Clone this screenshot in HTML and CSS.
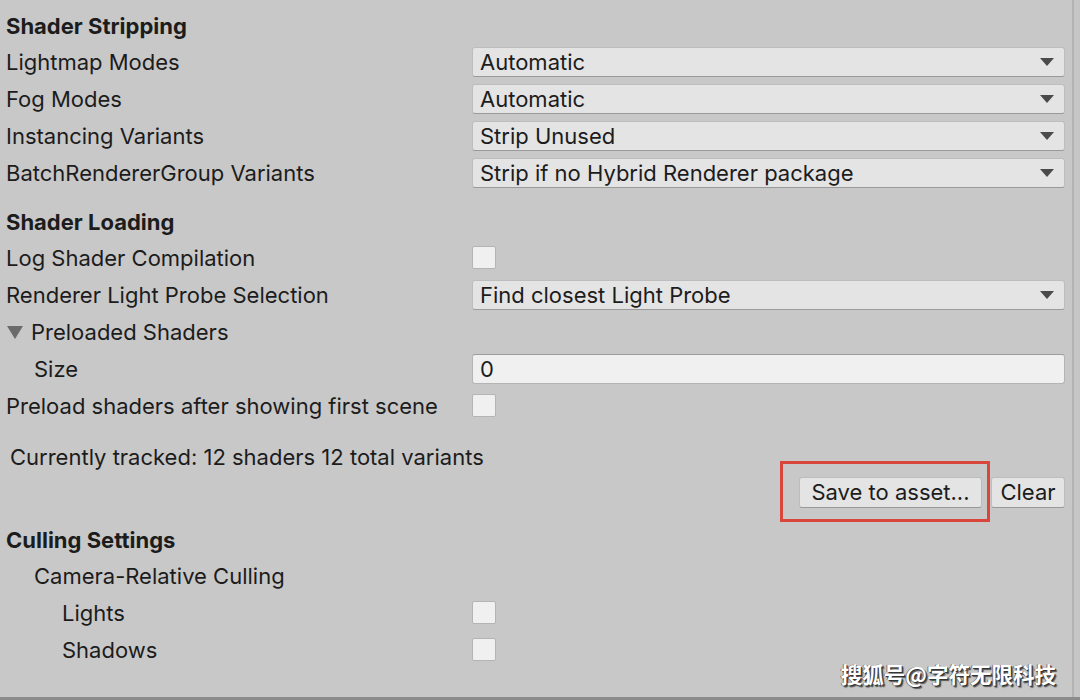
FILE: index.html
```html
<!DOCTYPE html>
<html>
<head>
<meta charset="utf-8">
<link rel="stylesheet" href="styles.css">
</head>
<body>
<div class="frame">
  <div class="panel">
    <div class="heading first">Shader Stripping</div>
    <div class="row">
      <div class="label">Lightmap Modes</div>
      <div class="control"><div class="dropdown"><span>Automatic</span><i class="arrow"></i></div></div>
    </div>
    <div class="row">
      <div class="label">Fog Modes</div>
      <div class="control"><div class="dropdown"><span>Automatic</span><i class="arrow"></i></div></div>
    </div>
    <div class="row">
      <div class="label">Instancing Variants</div>
      <div class="control"><div class="dropdown"><span>Strip Unused</span><i class="arrow"></i></div></div>
    </div>
    <div class="row">
      <div class="label">BatchRendererGroup Variants</div>
      <div class="control"><div class="dropdown"><span>Strip if no Hybrid Renderer package</span><i class="arrow"></i></div></div>
    </div>

    <div class="heading">Shader Loading</div>
    <div class="row">
      <div class="label">Log Shader Compilation</div>
      <div class="control"><div class="checkbox"></div></div>
    </div>
    <div class="row">
      <div class="label">Renderer Light Probe Selection</div>
      <div class="control"><div class="dropdown"><span>Find closest Light Probe</span><i class="arrow"></i></div></div>
    </div>
    <div class="row">
      <div class="label foldout"><i class="fold-tri"></i>Preloaded Shaders</div>
    </div>
    <div class="row">
      <div class="label indent1">Size</div>
      <div class="control"><div class="field">0</div></div>
    </div>
    <div class="row">
      <div class="label">Preload shaders after showing first scene</div>
      <div class="control"><div class="checkbox"></div></div>
    </div>
    <div class="row info">Currently tracked: 12 shaders 12 total variants</div>
    <div class="buttons">
      <div class="save-wrap">
        <div class="btn save">Save to asset...</div>
        <div class="highlight"></div>
      </div>
      <div class="btn clear">Clear</div>
    </div>

    <div class="heading">Culling Settings</div>
    <div class="row">
      <div class="label indent1">Camera-Relative Culling</div>
    </div>
    <div class="row">
      <div class="label indent2">Lights</div>
      <div class="control"><div class="checkbox"></div></div>
    </div>
    <div class="row">
      <div class="label indent2">Shadows</div>
      <div class="control"><div class="checkbox"></div></div>
    </div>
  </div>
  <div class="scrollbar"></div>
  <div class="watermark">搜狐号@字符无限科技</div>
</div>
</body>
</html>
```

FILE: styles.css
```css
* { box-sizing: border-box; }

html, body {
  margin: 0;
  padding: 0;
  width: 1080px;
  height: 700px;
  overflow: hidden;
  background: #c8c8c8;
}

.frame {
  position: relative;
  display: flex;
  width: 1080px;
  height: 700px;
  border-bottom: 3px solid #8c8c8c;
  font-family: Inter, "Noto Sans", "Liberation Sans", sans-serif;
  font-size: 22px;
  color: #1c1c1c;
}

.panel {
  flex: 1;
  padding: 9px 7px 0 6px;
}

.scrollbar {
  width: 8px;
  background: #c6c6c6;
  border-left: 2px solid #b3b3b3;
}

.heading {
  height: 34px;
  display: flex;
  align-items: center;
  font-weight: 700;
  margin-top: 14px;
}
.heading.first { margin-top: 0; }

.row {
  height: 37px;
  display: flex;
  align-items: center;
}

.label {
  width: 466px;
  flex: none;
  white-space: nowrap;
}

.indent1 { padding-left: 28px; }
.indent2 { padding-left: 56px; }

.foldout {
  display: flex;
  align-items: center;
}
.fold-tri {
  display: inline-block;
  width: 0;
  height: 0;
  border-left: 8px solid transparent;
  border-right: 8px solid transparent;
  border-top: 13px solid #6b6b6b;
  margin: 2px 8px 0 1px;
}

.control {
  flex: 1;
  display: flex;
  align-items: center;
}

.dropdown {
  flex: 1;
  height: 30px;
  display: flex;
  align-items: center;
  justify-content: space-between;
  padding: 0 10px 0 7px;
  background: #e4e4e4;
  border: 1px solid #bdbdbd;
  border-bottom-color: #9a9a9a;
  border-radius: 3px;
}

.arrow {
  width: 0;
  height: 0;
  border-left: 7px solid transparent;
  border-right: 7px solid transparent;
  border-top: 8px solid #4a4a4a;
}

.checkbox {
  width: 24px;
  height: 23px;
  background: #f0f0f0;
  border: 1px solid #b4b4b4;
  border-radius: 2px;
}

.field {
  flex: 1;
  height: 30px;
  display: flex;
  align-items: center;
  padding-left: 7px;
  background: #f0f0f0;
  border: 1px solid #b4b4b4;
  border-top-color: #9c9c9c;
  border-radius: 3px;
}

.info {
  margin-top: 14px;
  padding-left: 4px;
}

.buttons {
  height: 34px;
  display: flex;
  justify-content: flex-end;
  align-items: center;
  gap: 9px;
}

.save-wrap {
  position: relative;
  display: flex;
}

.btn {
  height: 31px;
  display: flex;
  align-items: center;
  justify-content: center;
  background: #e4e4e4;
  border: 1px solid #bdbdbd;
  border-bottom-color: #999;
  border-radius: 3px;
}
.save { width: 183px; }
.clear { width: 74px; }

.highlight {
  position: absolute;
  left: -19px;
  top: -16px;
  width: 210px;
  height: 61px;
  border: 3px solid #d8463c;
}

.watermark {
  position: absolute;
  right: 24px;
  bottom: 8px;
  font-family: "Noto Sans CJK SC", sans-serif;
  font-weight: 700;
  font-size: 21.5px;
  color: #ffffff;
  text-shadow: 1px 1px 0 #333, 2px 2px 1px #555, -1px 0 0 #777;
}
```
